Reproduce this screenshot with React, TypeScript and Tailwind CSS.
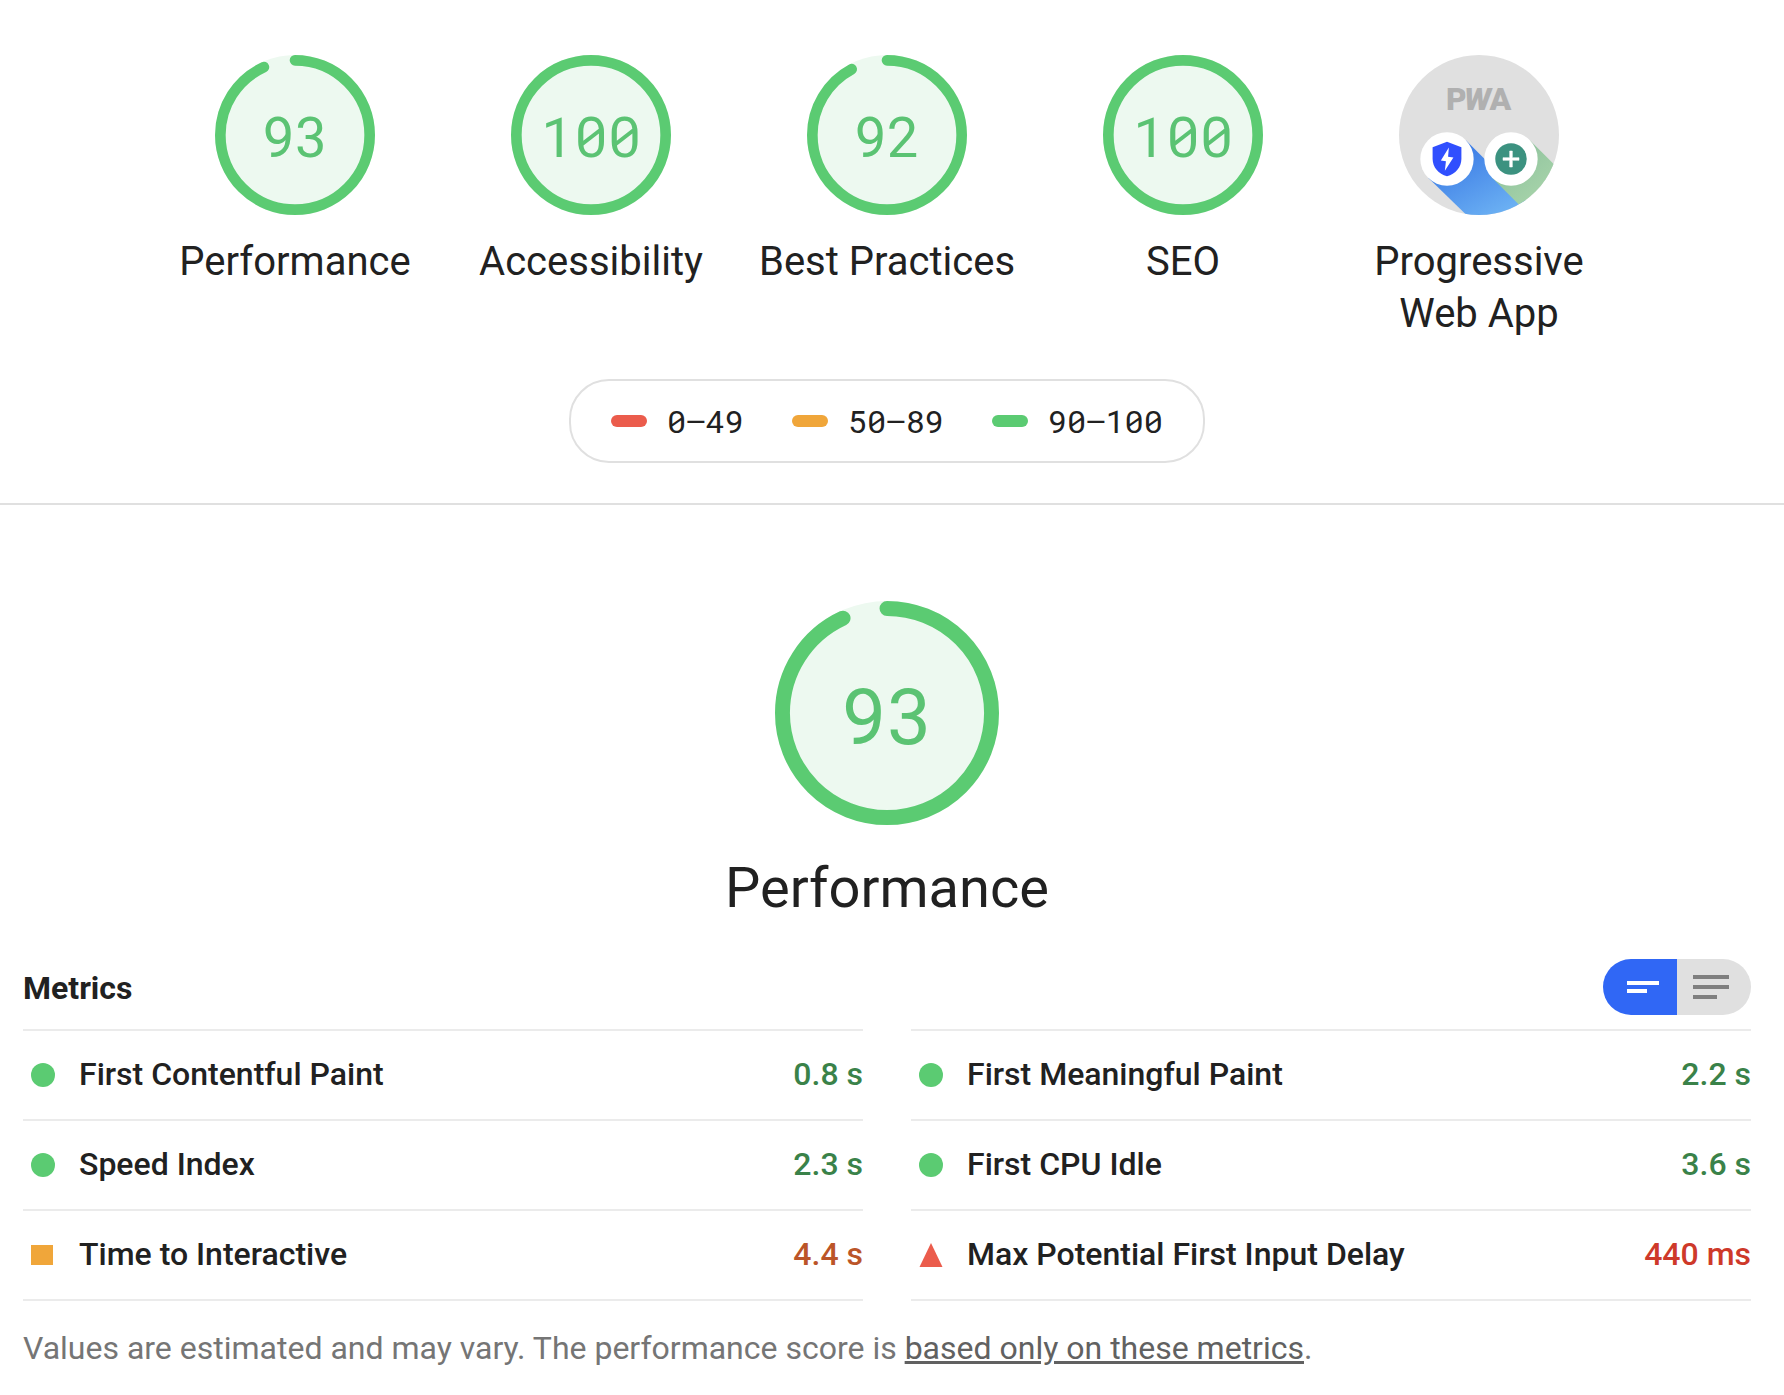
import { useState } from "react";

type Rating = "pass" | "average" | "fail";

type Category = {
  title: string;
  score: number;
};

type Metric = {
  title: string;
  value: string;
  rating: Rating;
};

const categories: Category[] = [
  { title: "Performance", score: 93 },
  { title: "Accessibility", score: 100 },
  { title: "Best Practices", score: 92 },
  { title: "SEO", score: 100 },
];

const scale = [
  { label: "0–49", className: "bg-[#eb5c4c]" },
  { label: "50–89", className: "bg-[#f0a63a]" },
  { label: "90–100", className: "bg-[#5bcb72]" },
];

const metricColumns: Metric[][] = [
  [
    { title: "First Contentful Paint", value: "0.8 s", rating: "pass" },
    { title: "Speed Index", value: "2.3 s", rating: "pass" },
    { title: "Time to Interactive", value: "4.4 s", rating: "average" },
  ],
  [
    { title: "First Meaningful Paint", value: "2.2 s", rating: "pass" },
    { title: "First CPU Idle", value: "3.6 s", rating: "pass" },
    { title: "Max Potential First Input Delay", value: "440 ms", rating: "fail" },
  ],
];

const valueColors: Record<Rating, string> = {
  pass: "text-[#3a8249]",
  average: "text-[#bb5528]",
  fail: "text-[#ce392a]",
};

// 2πr of the r=56 gauge ring
const CIRCUMFERENCE = 2 * Math.PI * 56;

function GaugeRing({ score }: { score: number }) {
  return (
    <svg viewBox="0 0 120 120" className="col-start-1 row-start-1 h-full w-full" aria-hidden="true">
      <circle cx="60" cy="60" r="60" fill="#edf9f0" />
      <circle
        cx="60"
        cy="60"
        r="56"
        fill="none"
        stroke="#5bcb72"
        strokeWidth="8"
        strokeLinecap="round"
        strokeDasharray={`${(score / 100) * CIRCUMFERENCE} ${CIRCUMFERENCE}`}
        transform="rotate(-90 60 60)"
      />
    </svg>
  );
}

function Gauge({ title, score }: Category) {
  return (
    <a href={`#${title.toLowerCase().replace(" ", "-")}`} className="flex w-[296px] flex-col items-center">
      <div className="grid size-40 place-items-center">
        <GaugeRing score={score} />
        <span className="col-start-1 row-start-1 font-['Roboto_Mono',monospace] text-[56px] text-[#5bc373]">
          {score}
        </span>
      </div>
      <span className="mt-[21px] text-center text-[40px] leading-[52px]">{title}</span>
    </a>
  );
}

function PwaGauge() {
  return (
    <a href="#pwa" className="flex w-[296px] flex-col items-center">
      <svg viewBox="0 0 60 60" className="size-40" role="img" aria-label="Fast and reliable, installable">
        <defs>
          <linearGradient id="fast-shadow" gradientUnits="userSpaceOnUse" x1="24" y1="36" x2="37" y2="60">
            <stop offset="0" stopColor="#3f7fe6" />
            <stop offset="1" stopColor="#6bb0f3" />
          </linearGradient>
          <linearGradient id="install-shadow" gradientUnits="userSpaceOnUse" x1="44" y1="40" x2="56" y2="54">
            <stop offset="0" stopColor="#94c6a0" />
            <stop offset="1" stopColor="#a9d5ab" />
          </linearGradient>
          <clipPath id="pwa-clip">
            <circle cx="30" cy="30" r="30" />
          </clipPath>
        </defs>
        <circle cx="30" cy="30" r="30" fill="#e0e0e0" />
        <g clipPath="url(#pwa-clip)">
          <path fill="url(#fast-shadow)" d="M25.07 31.93L60 66.86 45.93 80 10.93 46.07z" />
          <path fill="url(#install-shadow)" d="M49.07 31.93L70 52.86 55.93 67.07 34.93 46.07z" />
        </g>
        {/* interlocking wordmark: each letter cuts a thin notch into the one before */}
        <g
          fill="#b0b0b0"
          stroke="#e0e0e0"
          strokeWidth="1"
          paintOrder="stroke"
          className="font-[Roboto,sans-serif] text-[12px] font-black"
        >
          <text x="17.6" y="20.8">P</text>
          <text x="33.9" y="20.8">A</text>
          <text x="24.4" y="20.8" fontStyle="italic">W</text>
        </g>
        <circle cx="18" cy="39" r="10" fill="#fff" />
        <path
          fill="#304ffe"
          d="M18 32.500l5.4 2.100v4.300c0 3.100-2.200 5.800-5.4 6.600-3.200-.8-5.400-3.500-5.400-6.600v-4.300z"
        />
        <path fill="#fff" d="M18.700 34.700l-3 4.900 1.900.2-.4 3.600 3.200-5-2-.2z" />
        <circle cx="42" cy="39" r="10" fill="#fff" />
        <circle cx="42" cy="39" r="5.9" fill="#3c9280" />
        <path fill="#fff" d="M42.5 36h-1v2.5H39v1h2.5V42h1v-2.5H45v-1h-2.5z" stroke="#fff" strokeWidth=".2" />
      </svg>
      <span className="mt-[21px] text-center text-[40px] leading-[52px]">Progressive Web App</span>
    </a>
  );
}

function RatingIcon({ rating }: { rating: Rating }) {
  return (
    <svg viewBox="0 0 24 24" className="size-6 shrink-0" aria-hidden="true">
      {rating === "pass" && <circle cx="12" cy="12" r="12" fill="#5bcb72" />}
      {rating === "average" && <path fill="#f0a63a" d="M0 2h22v20H0z" />}
      {rating === "fail" && <path fill="#eb5c4c" d="M12 0l11.5 24H.5z" />}
    </svg>
  );
}

function MetricRow({ title, value, rating }: Metric) {
  return (
    <li className="flex items-start border-b-2 border-[#ebebeb] pt-[23px] pb-[25px] pl-2 leading-10 font-medium">
      <span className="pt-[9px]">
        <RatingIcon rating={rating} />
      </span>
      <span className="ml-6 grow">{title}</span>
      <span className={valueColors[rating]}>{value}</span>
    </li>
  );
}

export default function App() {
  const [expanded, setExpanded] = useState(false);

  return (
    <main className="bg-white font-[Roboto,sans-serif] text-[32px] text-[#212121]">
      <header className="flex flex-col items-center border-b-2 border-[#e0e0e0] pt-[55px] pr-[33px] pb-10 pl-[23px]">
        <nav className="flex justify-center">
          {categories.map((category) => (
            <Gauge key={category.title} {...category} />
          ))}
          <PwaGauge />
        </nav>

        <div className="mt-[39px] flex gap-12 rounded-[40px] border-2 border-[#e0e0e0] px-10 py-5 font-['Roboto_Mono',monospace] leading-10">
          {scale.map((range) => (
            <span key={range.label} className="flex items-center gap-5">
              <span className={`h-3 w-9 rounded-full ${range.className}`} />
              {range.label}
            </span>
          ))}
        </div>
      </header>

      <section id="performance" className="pt-24 pr-[33px] pb-7 pl-[23px]">
        <div className="flex flex-col items-center">
          <div className="grid size-56 place-items-center">
            <GaugeRing score={93} />
            <span className="col-start-1 row-start-1 font-['Roboto_Mono',monospace] text-[78px] text-[#5bc373]">
              93
            </span>
          </div>
          <h1 className="mt-7 text-[56px] leading-[70px]">Performance</h1>
        </div>

        <div className="mt-9 mb-3.5 flex items-center justify-between">
          <h2 className="pt-0.5 font-bold">Metrics</h2>
          <div className="flex h-14 overflow-hidden rounded-full">
            <button
              type="button"
              onClick={() => setExpanded(false)}
              aria-pressed={!expanded}
              aria-label="Compact view"
              className="flex w-[74px] flex-col justify-center gap-1 bg-[#3067f5] pl-6"
            >
              <span className="h-1 w-8 bg-white" />
              <span className="h-1 w-5 bg-white" />
            </button>
            <button
              type="button"
              onClick={() => setExpanded(true)}
              aria-pressed={expanded}
              aria-label="Expanded view"
              className="flex w-[74px] flex-col justify-center gap-1.5 bg-[#e0e0e0] pl-4"
            >
              <span className="h-1 w-9 bg-[#7f7f7f]" />
              <span className="h-1 w-9 bg-[#7f7f7f]" />
              <span className="h-1 w-6 bg-[#7f7f7f]" />
            </button>
          </div>
        </div>

        <div className="grid grid-cols-2 gap-12">
          {metricColumns.map((metrics) => (
            <ul key={metrics[0].title} className="border-t-2 border-[#ebebeb]">
              {metrics.map((metric) => (
                <MetricRow key={metric.title} {...metric} />
              ))}
            </ul>
          ))}
        </div>

        <p className="mt-7 leading-[38px] text-[#757575]">
          Values are estimated and may vary. The performance score is{" "}
          <a href="#metrics" className="text-[#616161] underline">
            based only on these metrics
          </a>
          .
        </p>
      </section>
    </main>
  );
}
